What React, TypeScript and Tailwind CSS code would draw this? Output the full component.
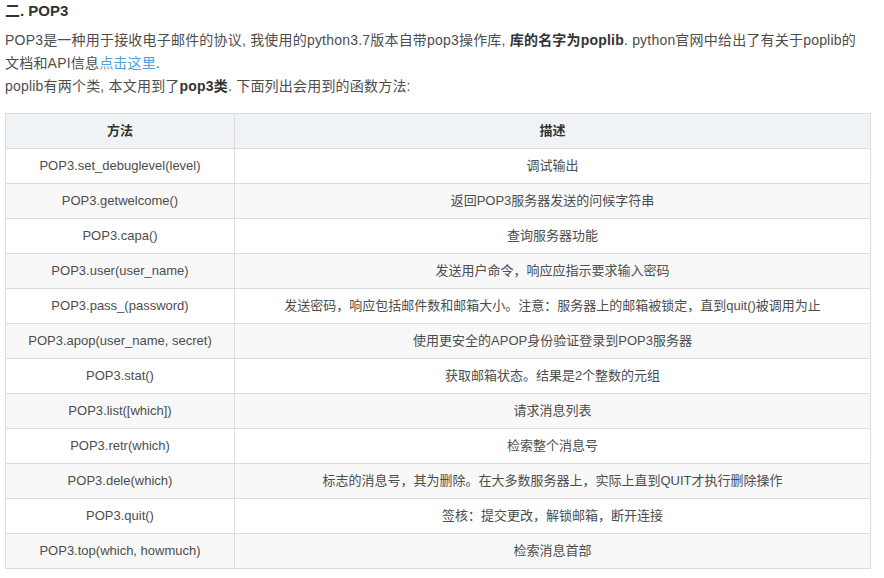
import React from "react";

const rows: [string, string][] = [
  ["POP3.set_debuglevel(level)", "调试输出"],
  ["POP3.getwelcome()", "返回POP3服务器发送的问候字符串"],
  ["POP3.capa()", "查询服务器功能"],
  ["POP3.user(user_name)", "发送用户命令，响应应指示要求输入密码"],
  ["POP3.pass_(password)", "发送密码，响应包括邮件数和邮箱大小。注意：服务器上的邮箱被锁定，直到quit()被调用为止"],
  ["POP3.apop(user_name, secret)", "使用更安全的APOP身份验证登录到POP3服务器"],
  ["POP3.stat()", "获取邮箱状态。结果是2个整数的元组"],
  ["POP3.list([which])", "请求消息列表"],
  ["POP3.retr(which)", "检索整个消息号"],
  ["POP3.dele(which)", "标志的消息号，其为删除。在大多数服务器上，实际上直到QUIT才执行删除操作"],
  ["POP3.quit()", "签核：提交更改，解锁邮箱，断开连接"],
  ["POP3.top(which, howmuch)", "检索消息首部"],
];

export default function App() {
  return (
    <div
      className="w-[884px] h-[578px] bg-white text-[#4d4d4d] px-[5px] overflow-hidden"
      style={{ fontFamily: '"Liberation Sans", "Noto Sans CJK SC", sans-serif' }}
    >
      <h2 className="text-[15px] font-bold leading-[22px] text-[#333]">二. POP3</h2>
      <p className="mt-[7px] text-[14px] leading-[23px] tracking-[0.2px]">
        POP3是一种用于接收电子邮件的协议, 我使用的python3.7版本自带pop3操作库,{" "}
        <b className="text-[#333]">库的名字为poplib</b>. python官网中给出了有关于poplib的
        <br />
        文档和API信息
        <span className="text-[#4ea1db]">点击这里</span>.
        <br />
        poplib有两个类, 本文用到了<b className="text-[#333]">pop3类</b>. 下面列出会用到的函数方法:
      </p>
      <table className="mt-[15px] w-[866px] border-collapse text-[13px] text-[#4d4d4d]">
        <thead>
          <tr className="bg-[#eff3f5] h-[35px]">
            <th className="w-[229px] border border-[#ddd] font-bold text-[#333] text-center">方法</th>
            <th className="border border-[#ddd] font-bold text-[#333] text-center">描述</th>
          </tr>
        </thead>
        <tbody>
          {rows.map(([a, b], i) => (
            <tr key={i} className={"h-[35px] " + (i % 2 === 1 ? "bg-[#f8f8f8]" : "bg-white")}>
              <td className="border border-[#ddd] text-center">{a}</td>
              <td className="border border-[#ddd] text-center">{b}</td>
            </tr>
          ))}
        </tbody>
      </table>
    </div>
  );
}
